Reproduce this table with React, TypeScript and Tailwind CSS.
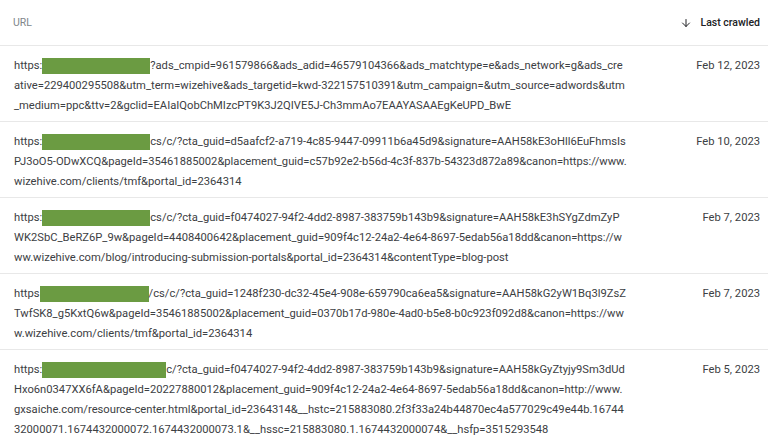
import { ArrowDown } from 'lucide-react'

interface Row {
  prefix: string
  maskWidth: number
  lines: string[]
  date: string
}

const rows: Row[] = [
  {
    prefix: 'https:',
    maskWidth: 108,
    lines: [
      '?ads_cmpid=961579866&ads_adid=46579104366&ads_matchtype=e&ads_network=g&ads_cre',
      'ative=229400295508&utm_term=wizehive&ads_targetid=kwd-322157510391&utm_campaign=&utm_source=adwords&utm',
      '_medium=ppc&ttv=2&gclid=EAIaIQobChMIzcPT9K3J2QIVE5J-Ch3mmAo7EAAYASAAEgKeUPD_BwE',
    ],
    date: 'Feb 12, 2023',
  },
  {
    prefix: 'https:',
    maskWidth: 108,
    lines: [
      'cs/c/?cta_guid=d5aafcf2-a719-4c85-9447-09911b6a45d9&signature=AAH58kE3oHll6EuFhmsIs',
      'PJ3oO5-ODwXCQ&pageId=35461885002&placement_guid=c57b92e2-b56d-4c3f-837b-54323d872a89&canon=https://www.',
      'wizehive.com/clients/tmf&portal_id=2364314',
    ],
    date: 'Feb 10, 2023',
  },
  {
    prefix: 'https:',
    maskWidth: 108,
    lines: [
      'cs/c/?cta_guid=f0474027-94f2-4dd2-8987-383759b143b9&signature=AAH58kE3hSYgZdmZyP',
      'WK2SbC_BeRZ6P_9w&pageId=4408400642&placement_guid=909f4c12-24a2-4e64-8697-5edab56a18dd&canon=https://w',
      'ww.wizehive.com/blog/introducing-submission-portals&portal_id=2364314&contentType=blog-post',
    ],
    date: 'Feb 7, 2023',
  },
  {
    prefix: 'https',
    maskWidth: 109,
    lines: [
      '/cs/c/?cta_guid=1248f230-dc32-45e4-908e-659790ca6ea5&signature=AAH58kG2yW1Bq3l9ZsZ',
      'TwfSK8_g5KxtQ6w&pageId=35461885002&placement_guid=0370b17d-980e-4ad0-b5e8-b0c923f092d8&canon=https://ww',
      'w.wizehive.com/clients/tmf&portal_id=2364314',
    ],
    date: 'Feb 7, 2023',
  },
  {
    prefix: 'https:',
    maskWidth: 124,
    lines: [
      'c/?cta_guid=f0474027-94f2-4dd2-8987-383759b143b9&signature=AAH58kGyZtyjy9Sm3dUd',
      'Hxo6n0347XX6fA&pageId=20227880012&placement_guid=909f4c12-24a2-4e64-8697-5edab56a18dd&canon=http://www.',
      'gxsaiche.com/resource-center.html&portal_id=2364314&__hstc=215883080.2f3f33a24b44870ec4a577029c49e44b.16744',
      '32000071.1674432000072.1674432000073.1&__hssc=215883080.1.1674432000074&__hsfp=3515293548',
    ],
    date: 'Feb 5, 2023',
  },
]

export default function App() {
  return (
    <div className="w-[768px] h-[438px] overflow-hidden bg-white font-['Roboto',_'Liberation_Sans',_sans-serif]">
      {/* Header */}
      <div className="h-[46px] flex items-center justify-between pl-[13px] pr-[8px] border-b border-[#e8e8e8]">
        <span className="text-[10.5px] text-[#80868b]">URL</span>
        <div className="flex items-center gap-[8px] text-[10.5px] font-medium text-[#202124]">
          <ArrowDown className="w-[12px] h-[12px]" strokeWidth={2} />
          <span>Last crawled</span>
        </div>
      </div>

      {/* Rows */}
      {rows.map((row, i) => (
        <div
          key={i}
          className="flex justify-between pl-[14px] pr-[8px] pt-[10px] pb-[5px] border-b border-[#e8e8e8]"
        >
          <div className="text-[11.2px] leading-[20px] text-[#3c4043] whitespace-nowrap">
            <div className="flex items-center">
              <span className="shrink-0">{row.prefix}</span>
              <span
                className="inline-block shrink-0 h-[16px] bg-[#6b9b42]"
                style={{ width: row.maskWidth }}
              />
              <span className="shrink-0">{row.lines[0]}</span>
            </div>
            {row.lines.slice(1).map((line, j) => (
              <div key={j}>{line}</div>
            ))}
          </div>
          <div className="text-[11.2px] leading-[20px] text-[#3c4043] whitespace-nowrap">{row.date}</div>
        </div>
      ))}
    </div>
  )
}
